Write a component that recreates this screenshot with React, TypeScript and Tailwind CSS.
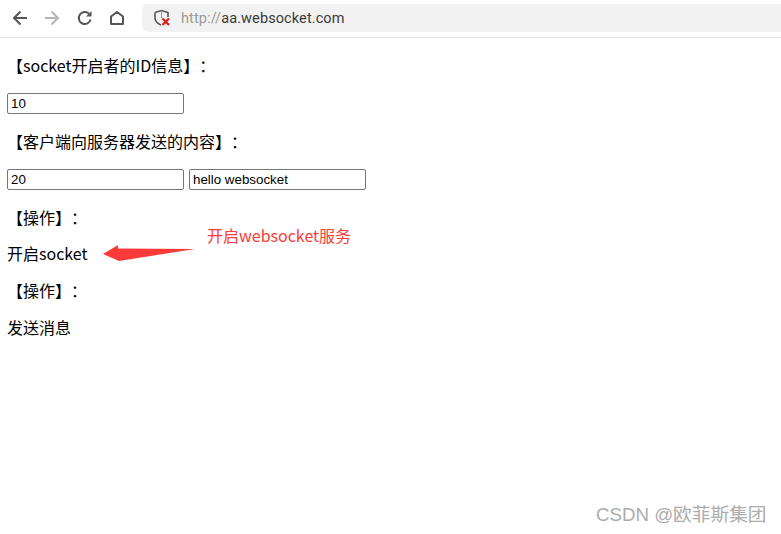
const cjk = "font-['Noto_Sans_CJK_SC',sans-serif] [text-spacing-trim:space-all]";

function Toolbar() {
  return (
    <div className="flex h-[38px] items-center border-b border-[#e8e8e8] bg-white pb-[1px]">
      <div className="flex items-center pl-[12px]">
        <svg className="h-[16px] w-[16px]" viewBox="0 0 16 16" fill="none" stroke="#555" strokeWidth="2">
          <path d="M15 8H2M8.5 1.5 2 8l6.5 6.5" />
        </svg>
        <svg className="ml-[16px] h-[16px] w-[16px]" viewBox="0 0 16 16" fill="none" stroke="#b5b5b5" strokeWidth="2">
          <path d="M1 8h13M7.500 1.500 14 8l-6.500 6.500" />
        </svg>
        <svg className="ml-[17px] h-[16px] w-[16px]" viewBox="0 0 16 16" fill="none" stroke="#555" strokeWidth="2">
          <path d="M13.600 9.500A6 6 0 1 1 12 3.800" />
          <path d="M14.500 1v5.500H9z" fill="#555" stroke="none" />
        </svg>
        <svg className="ml-[16px] h-[16px] w-[16px]" viewBox="0 0 16 16" fill="none" stroke="#555" strokeWidth="2" strokeLinejoin="round">
          <path d="M2 6.500 8 2l6 4.500V14H2z" />
        </svg>
      </div>
      <div className="ml-[17px] flex h-[28px] flex-1 items-center rounded-l-[6px] bg-[#f2f2f2] pl-[11px]">
        <svg className="h-[18px] w-[18px]" viewBox="0 0 18 18" fill="none">
          <path d="M2 3.500 8.500 1.500 15 3.500V8M2 3.500V9c0 3 2.500 5.500 6 7" stroke="#555" strokeWidth="1.600" />
          <path d="M8.500 1.500V9" stroke="#999" strokeWidth="1" />
          <path d="M9.500 9.500l6.500 6.500M16 9.500 9.500 16" stroke="#d81e1e" strokeWidth="2.200" />
        </svg>
        <span className="ml-[10px] mt-[2px] font-['Roboto',sans-serif] text-[14.500px] leading-none tracking-[0.1px]">
          <span className="text-[#9a9a9a]">http://</span>
          <span className="text-[#3a3a3a]">aa.websocket.com</span>
        </span>
      </div>
    </div>
  );
}

function Line({ children }: { children: React.ReactNode }) {
  return <p className="h-[20.800px] text-[16px] leading-[20.800px] text-black">{children}</p>;
}

function Field({ value }: { value: string }) {
  return (
    <input
      readOnly
      value={value}
      className="h-[21px] w-[177px] rounded-[2px] border border-[#767676] bg-white px-[3px] font-['Liberation_Sans',sans-serif] text-[13.330px] text-black"
    />
  );
}

export default function App() {
  return (
    <div className={`relative h-[534px] w-[781px] overflow-hidden bg-white ${cjk}`}>
      <Toolbar />
      <div className="flex flex-col gap-[16px] pl-[7px] pt-[17px]">
        <Line>【socket开启者的ID信息】：</Line>
        <div className="flex h-[23px] items-center">
          <Field value="10" />
        </div>
        <Line>【客户端向服务器发送的内容】：</Line>
        <div className="flex h-[23px] items-center gap-[5px]">
          <Field value="20" />
          <Field value="hello websocket" />
        </div>
        <Line>【操作】：</Line>
        <Line>开启socket</Line>
        <Line>【操作】：</Line>
        <Line>发送消息</Line>
      </div>

      {/* annotation drawn on top of the page */}
      <svg className="absolute left-[100px] top-[240px] h-[26px] w-[100px]" viewBox="0 0 100 26">
        <path d="M3 14 18 5 18 8.500 95 9 19 21Z" fill="#fb3a3a" />
      </svg>
      <span className="absolute left-[207px] top-[224px] text-[16px] leading-[22px] text-[#fb3a3a]">开启websocket服务</span>
      <span className="absolute left-[596px] top-[503px] font-['Liberation_Sans','Noto_Sans_CJK_SC',sans-serif] text-[18.700px] leading-[24px] text-[#acacac]">CSDN @欧菲斯集团</span>
    </div>
  );
}
